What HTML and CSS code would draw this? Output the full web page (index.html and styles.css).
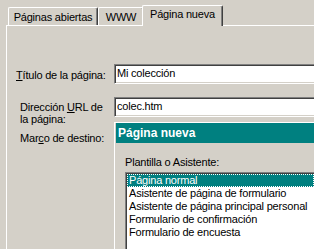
FILE: index.html
```html
<!DOCTYPE html>
<html>
<head>
        <meta charset="UTF-8">
        <title>Página nueva</title>
        <link rel="stylesheet" href="styles.css">
</head>
<body>
        <div class="dialog">
                <div class="tabs">
                        <div class="tab tab-open">Páginas abiertas</div>
                        <div class="tab tab-www">WWW</div>
                        <div class="tab tab-active">Página nueva</div>
                </div>

                <div class="panel">
                        <div class="labels">
                                <div class="label label-title"><u>T</u>ítulo de la página:</div>
                                <div class="label label-url">Dirección <u>U</u>RL de<br>la página:</div>
                                <div class="label label-frame">Mar<u>c</u>o de destino:</div>
                        </div>

                        <div class="controls">
                                <div class="field field-title">Mi colección</div>
                                <div class="field field-url">colec.htm</div>

                                <div class="subpanel">
                                        <div class="subhead">Página nueva</div>
                                        <div class="subbody">
                                                <div class="caption">Plantilla o Asistente:</div>
                                                <ul class="listbox">
                                                        <li class="selected">Página normal</li>
                                                        <li>Asistente de página de formulario</li>
                                                        <li>Asistente de página principal personal</li>
                                                        <li>Formulario de confirmación</li>
                                                        <li>Formulario de encuesta</li>
                                                </ul>
                                        </div>
                                </div>
                        </div>
                </div>
        </div>
</body>
</html>
```

FILE: styles.css
```css
html, body{
        margin: 0;
        padding: 0;
        overflow: hidden;
        background: #d4d0c8;
}
body{
        font-family: "Liberation Sans", Arial, sans-serif;
        font-size: 11px;
        line-height: 13px;
        letter-spacing: -0.2px;
        color: #000;
}
.dialog{
        width: 314px;
        height: 249px;
        display: flex;
        flex-direction: column;
        overflow: hidden;
}

/* tabs */
.tabs{
        display: flex;
        align-items: flex-end;
        height: 21px;
        padding: 5px 0 0 8px;
        margin-bottom: -1px;
        flex: none;
}
.tab{
        box-sizing: border-box;
        height: 18px;
        margin-bottom: 1px;
        padding-top: 3px;
        text-align: center;
        white-space: nowrap;
        border-top: 1px solid #fff;
        border-left: 1px solid #fff;
        border-right: 1px solid #404040;
        box-shadow: inset -1px 0 #808080;
        border-radius: 2px 2px 0 0;
}
.tab-open{
        width: 90px;
}
.tab-www{
        width: 46px;
}
.tab-active{
        width: 81px;
        height: 21px;
        margin: 0 -2px;
        padding-top: 2px;
        position: relative;
        z-index: 1;
        background: #d4d0c8;
}

/* panel */
.panel{
        flex: 1;
        display: flex;
        margin-left: 6px;
        padding-top: 38px;
        border-top: 1px solid #fff;
        border-left: 1px solid #fff;
}
.labels{
        width: 107px;
        flex: none;
}
.label{
        line-height: 12px;
        padding-left: 13px;
        white-space: nowrap;
}
.label-title{
        margin-top: 5px;
        padding-left: 9px;
}
.label-url{
        margin-top: 20px;
}
.label-frame{
        margin-top: 7px;
}
.controls{
        flex: 1;
        min-width: 0;
}
.field{
        box-sizing: border-box;
        height: 20px;
        padding: 2px 0 0 2px;
        background: #fff;
        border: 1px solid;
        border-right: none;
        border-color: #808080 #fff #fff #808080;
        box-shadow: inset 1px 1px #404040, inset 0 -1px #d4d0c8;
        white-space: nowrap;
}
.field-url{
        margin-top: 13px;
}

/* template box */
.subpanel{
        margin-top: 5px;
        height: 127px;
        border-top: 1px solid #fff;
        border-left: 1px solid #fff;
}
.subhead{
        height: 20px;
        box-sizing: border-box;
        margin-left: 1px;
        padding: 3px 0 0 2px;
        background: #008080;
        color: #fff;
        font-size: 12px;
        font-weight: bold;
        line-height: 14px;
        letter-spacing: 0;
}
.subbody{
        padding: 13px 0 0 10px;
}
.listbox{
        list-style: none;
        box-sizing: border-box;
        margin: 3px 0 0 0;
        padding: 1px 0 0 1px;
        height: 77px;
        background: #fff;
        border-top: 1px solid #808080;
        border-left: 1px solid #808080;
        box-shadow: inset 1px 1px #404040;
}
.listbox li{
        line-height: 13px;
        padding-left: 2px;
        white-space: nowrap;
}
.listbox .selected{
        background: #008080;
        color: #fff;
        outline: 1px dotted #fff;
        outline-offset: -1px;
}
```
